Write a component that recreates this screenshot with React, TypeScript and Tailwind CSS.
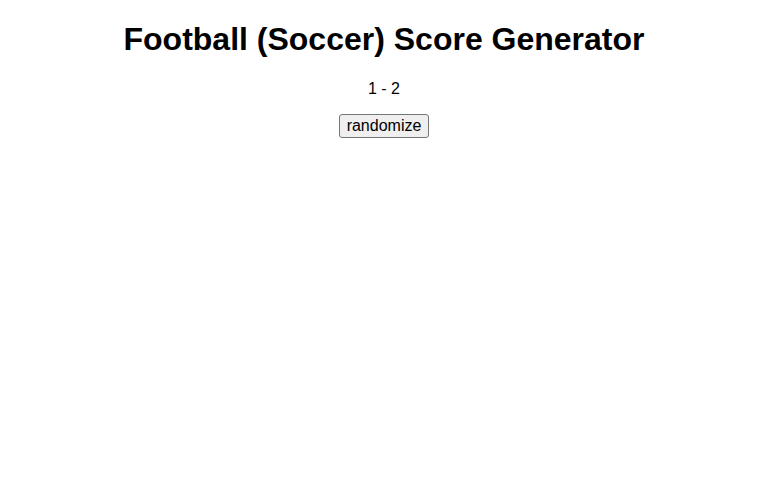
import { useState } from 'react'

export default function App() {
  const [score, setScore] = useState('1 - 2')

  const randomize = () => {
    const a = Math.floor(Math.random() * 5)
    const b = Math.floor(Math.random() * 5)
    setScore(`${a} - ${b}`)
  }

  return (
    <div className="min-h-[480px] bg-white text-center text-black font-['Liberation_Sans',Arial,sans-serif]">
      <h1 className="pt-[21px] text-[32px] font-bold leading-[37px]">Football (Soccer) Score Generator</h1>
      <p className="mt-[22px] text-base leading-[18px]">{score}</p>
      <button
        type="button"
        onClick={randomize}
        className="mt-4 rounded-[3px] border border-[#767676] bg-[#efefef] px-[7px] py-[2px] text-base leading-[18px] text-black"
      >
        randomize
      </button>
    </div>
  )
}
